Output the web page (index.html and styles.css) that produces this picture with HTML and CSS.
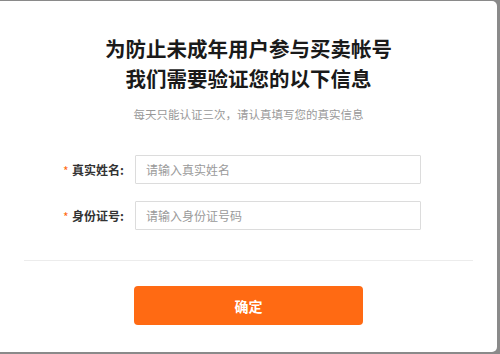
FILE: index.html
```html
<!DOCTYPE html>
<html lang="zh-CN">
<head>
<meta charset="utf-8">
<title>实名认证</title>
<link rel="stylesheet" href="styles.css">
</head>
<body>
<div class="panel">
  <h1 class="title">为防止未成年用户参与买卖帐号<br>我们需要验证您的以下信息</h1>
  <p class="subtitle">每天只能认证三次，请认真填写您的真实信息</p>
  <form class="form">
    <div class="row">
      <span class="star">*</span>
      <label class="label" for="name">真实姓名:</label>
      <input class="input" id="name" type="text" placeholder="请输入真实姓名">
    </div>
    <div class="row">
      <span class="star">*</span>
      <label class="label" for="idno">身份证号:</label>
      <input class="input" id="idno" type="text" placeholder="请输入身份证号码">
    </div>
  </form>
  <div class="divider"></div>
  <button class="btn" type="button">确定</button>
</div>
</body>
</html>
```
FILE: styles.css
```css
html, body {
  margin: 0;
  padding: 0;
}
body {
  background: #8a8a8a;
  width: 500px;
  height: 354px;
  overflow: hidden;
  font-family: "Noto Sans CJK SC", "Noto Sans", sans-serif;
}
.panel {
  box-sizing: border-box;
  width: 497px;
  height: 351px;
  margin-top: 1px;
  background: #fff;
  border-radius: 0 5px 5px 0;
  padding-top: 32px;
  display: flex;
  flex-direction: column;
}
.title {
  margin: 0;
  text-align: center;
  font-size: 20.5px;
  line-height: 30px;
  font-weight: bold;
  color: #1a1a1a;
}
.subtitle {
  margin: 12px 0 0;
  text-align: center;
  font-size: 11.5px;
  line-height: 18px;
  color: #999;
}
.form {
  margin: 32px 0 0;
  display: flex;
  flex-direction: column;
  gap: 17px;
}
.row {
  display: flex;
  align-items: center;
  padding-left: 63px;
}
.star {
  width: 9px;
  color: #ff6a13;
  font-size: 12px;
  line-height: 12px;
  padding-top: 3px;
}
.label {
  width: 63px;
  font-size: 12px;
  font-weight: bold;
  color: #333;
}
.input {
  box-sizing: border-box;
  width: 286px;
  height: 29px;
  margin: 0;
  border: 1px solid #dcdcdc;
  border-radius: 1px;
  padding: 0 10px;
  font-family: inherit;
  font-size: 12px;
  color: #333;
  outline: none;
}
.input::placeholder {
  color: #9a9a9a;
}
.divider {
  margin: 30px 24px 0;
  height: 1px;
  background: #ececec;
}
.btn {
  align-self: center;
  margin-top: 25px;
  width: 229px;
  height: 39px;
  border: none;
  border-radius: 4px;
  background: #ff6a13;
  color: #fff;
  font-family: inherit;
  font-size: 14px;
  font-weight: bold;
  cursor: pointer;
}
```
